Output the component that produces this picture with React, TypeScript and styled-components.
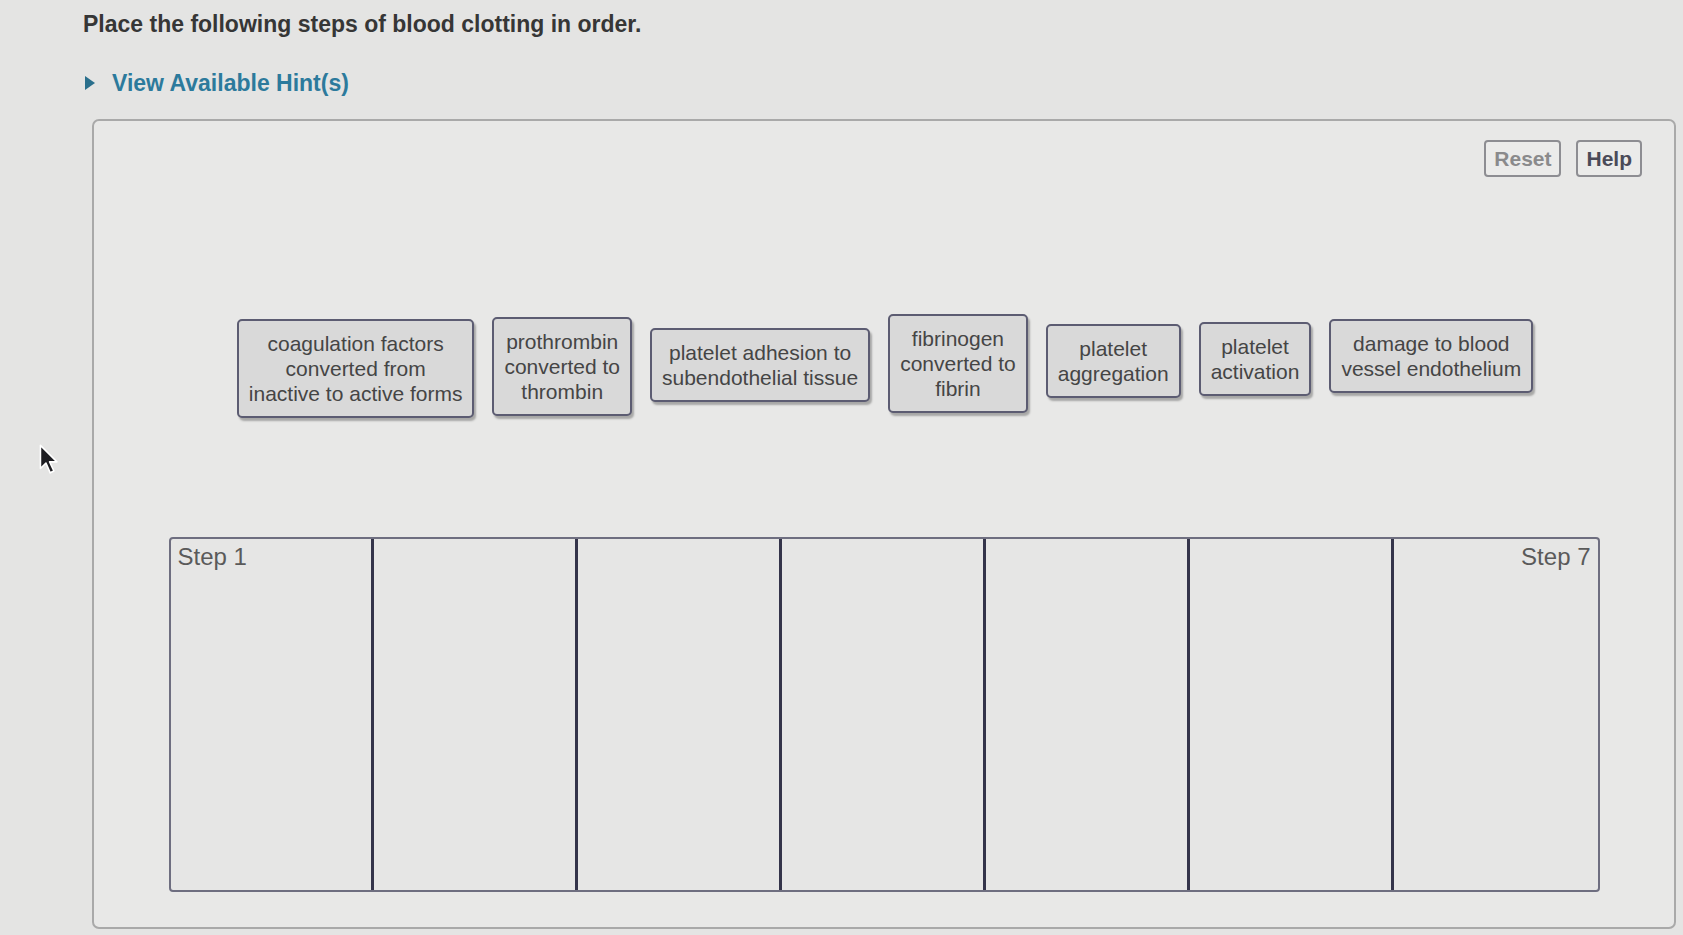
import React from "react";
import styled, { createGlobalStyle } from "styled-components";

const Global = createGlobalStyle`
  html, body { margin: 0; padding: 0; background: #e4e4e3; }
  body { font-family: "Liberation Sans", Arial, sans-serif; overflow: hidden; }
`;

const Page = styled.div`
  position: relative;
  width: 1683px;
  height: 935px;
  box-sizing: border-box;
  padding: 10px 0 0 83px;
  background: #e4e4e3;
`;

const Title = styled.h1`
  margin: 0;
  font-size: 23px;
  line-height: 28px;
  font-weight: 700;
  color: #363636;
`;

const HintRow = styled.div`
  display: flex;
  align-items: center;
  gap: 17px;
  margin-top: 31px;
  height: 28px;
  padding-left: 2px;
`;

const Triangle = styled.span`
  width: 0;
  height: 0;
  border-top: 7px solid transparent;
  border-bottom: 7px solid transparent;
  border-left: 10px solid #2a6f8c;
`;

const HintText = styled.span`
  font-size: 23px;
  font-weight: 700;
  color: #2c7a9c;
`;

const Panel = styled.div`
  margin: 22px 0 0 9px;
  width: 1584px;
  height: 810px;
  box-sizing: border-box;
  border: 2px solid #a9a9a9;
  border-radius: 7px;
  background: #e8e8e7;
  display: flex;
  flex-direction: column;
  padding: 19px 32px 0 0;
`;

const Toolbar = styled.div`
  display: flex;
  justify-content: flex-end;
  align-items: center;
  gap: 15px;
`;

const ToolButton = styled.button<{ $disabled?: boolean }>`
  font-family: "Liberation Sans", Arial, sans-serif;
  font-size: 21px;
  font-weight: 700;
  height: 37px;
  padding: 0 8px;
  background: #ebebea;
  border: 2px solid #8d8d92;
  border-radius: 4px;
  color: ${(p) => (p.$disabled ? "#8a8a8c" : "#4a4a58")};
`;

const CardRow = styled.div`
  display: flex;
  justify-content: center;
  align-items: center;
  gap: 18px;
  height: 100px;
  margin-top: 136px;
  padding-left: 34px;
`;

const Card = styled.div<{ $shift: number }>`
  box-sizing: border-box;
  padding: 10px 10px;
  border: 2px solid #5c5c72;
  border-radius: 5px;
  background: #d9d9d9;
  box-shadow: 2px 3px 2px rgba(0, 0, 0, 0.28);
  font-size: 21px;
  line-height: 25px;
  color: #454545;
  text-align: center;
  white-space: nowrap;
  transform: translateY(${(p) => p.$shift}px);
`;

const Table = styled.div`
  align-self: center;
  margin: 124px 0 0 32px;
  width: 1431px;
  height: 355px;
  box-sizing: border-box;
  display: grid;
  grid-template-columns: repeat(7, 1fr);
  border: 2px solid #6e6e80;
  border-radius: 4px;
  background: #e6e6e5;
`;

const Column = styled.div<{ $last?: boolean; $right?: boolean }>`
  border-right: ${(p) => (p.$last ? "none" : "3px solid #34344a")};
  padding: 3px 7px;
  display: flex;
  justify-content: ${(p) => (p.$right ? "flex-end" : "flex-start")};
  align-items: flex-start;
`;

const StepLabel = styled.span`
  font-size: 24px;
  line-height: 29px;
  color: #5a5a5a;
`;

const Cursor = styled.svg`
  position: absolute;
  left: 38px;
  top: 444px;
`;

const cards: { lines: string[]; shift: number }[] = [
  { lines: ["coagulation factors", "converted from", "inactive to active forms"], shift: 5 },
  { lines: ["prothrombin", "converted to", "thrombin"], shift: 3 },
  { lines: ["platelet adhesion to", "subendothelial tissue"], shift: 2 },
  { lines: ["fibrinogen", "converted to", "fibrin"], shift: 0 },
  { lines: ["platelet", "aggregation"], shift: -2 },
  { lines: ["platelet", "activation"], shift: -4 },
  { lines: ["damage to blood", "vessel endothelium"], shift: -7 },
];

export default function App() {
  return (
    <Page>
      <Global />
      <Title>Place the following steps of blood clotting in order.</Title>
      <HintRow>
        <Triangle />
        <HintText>View Available Hint(s)</HintText>
      </HintRow>
      <Panel>
        <Toolbar>
          <ToolButton $disabled>Reset</ToolButton>
          <ToolButton>Help</ToolButton>
        </Toolbar>
        <CardRow>
          {cards.map((c, i) => (
            <Card key={i} $shift={c.shift}>
              {c.lines.map((l, j) => (
                <React.Fragment key={j}>
                  {j > 0 && <br />}
                  {l}
                </React.Fragment>
              ))}
            </Card>
          ))}
        </CardRow>
        <Table>
          {Array.from({ length: 7 }).map((_, i) => (
            <Column key={i} $last={i === 6} $right={i === 6}>
              {i === 0 && <StepLabel>Step 1</StepLabel>}
              {i === 6 && <StepLabel>Step 7</StepLabel>}
            </Column>
          ))}
        </Table>
      </Panel>
      <Cursor width="22" height="32" viewBox="0 0 18 26">
        <path d="M2 1 L2 20 L6.5 15.5 L10 23.5 L13 22 L9.5 14.5 L15.5 14.5 Z" fill="#1e1e22" stroke="#ffffff" strokeWidth="1.3" strokeLinejoin="round" />
      </Cursor>
    </Page>
  );
}
